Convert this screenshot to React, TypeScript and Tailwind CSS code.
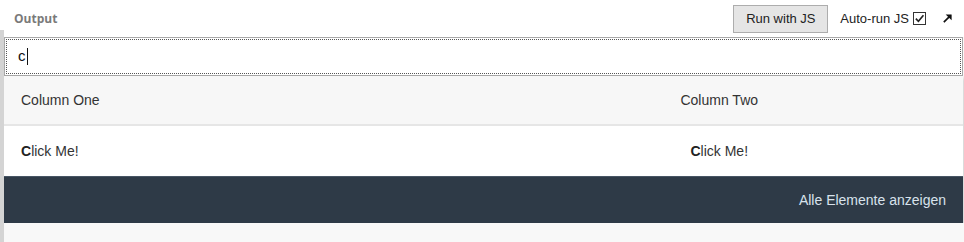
export default function App() {
  return (
    <div className="relative h-[242px] w-[964px] overflow-hidden bg-white font-['Liberation_Sans',Arial,sans-serif] text-[#333]">
      {/* left scroll strip */}
      <div className="absolute left-0 top-[30px] h-[212px] w-[4px] bg-[#d4d4d4]" />

      <header className="flex h-[37px] items-center justify-between pl-[14px] pr-[11px]">
        <span className="font-['Open_Sans',sans-serif] text-[12px] font-bold text-[#7a7a7a]">
          Output
        </span>
        <div className="flex items-center">
          <button className="h-[28px] w-[95px] border border-[#adadad] bg-[#e5e5e5] text-[13px] text-[#222]">
            Run with JS
          </button>
          <label className="ml-[12px] flex items-center text-[13px] text-[#222]">
            Auto-run JS
            <span className="ml-[4px] flex h-[13px] w-[13px] items-center justify-center border border-[#333] bg-white">
              <svg viewBox="0 0 12 12" className="h-[11px] w-[11px]">
                <path d="M2 6.2 L4.8 9 L10.3 2.5" fill="none" stroke="#222" strokeWidth="1.8" />
              </svg>
            </span>
          </label>
          <svg viewBox="0 0 12 12" className="ml-[16px] h-[11px] w-[11px]">
            <path d="M2 10 L9.5 2.5" stroke="#111" strokeWidth="1.8" />
            <path d="M4 1.5 H10.5 V8 Z" fill="#111" />
          </svg>
        </div>
      </header>

      <div className="ml-[4px] w-[960px] bg-[#f8f8f8] pr-[1px]">
        <div className="h-[39px] border border-[#a9a9a9] bg-white p-[1px]">
          <div className="flex h-full items-center border border-dotted border-[#555] pl-[11px] text-[15px] text-[#111]">
            c<span className="ml-[1px] h-[17px] w-px bg-[#111]" />
          </div>
        </div>

        <div className="shadow-[0_2px_3px_rgba(0,0,0,0.3)]">
          <div className="grid h-[50px] grid-cols-2 items-center border-b-2 border-[#e6e6e6] bg-[#f7f7f7] text-[14px] text-[#333]">
            <div className="pl-[17px]">Column One</div>
            <div className="pr-[8px] text-center">Column Two</div>
          </div>
          <div className="grid h-[50px] grid-cols-2 items-center bg-white text-[14px] text-[#333]">
            <div className="pl-[17px]">
              <b className="font-bold text-[#222]">C</b>lick Me!
            </div>
            <div className="pr-[8px] text-center">
              <b className="font-bold text-[#222]">C</b>lick Me!
            </div>
          </div>
          <div className="flex h-[47px] items-center justify-end border-t border-[#475564] bg-[#2e3a47] pr-[17px] text-[14px] text-[#d8e2ec]">
            Alle Elemente anzeigen
          </div>
        </div>
      </div>
      <div className="h-[20px] bg-[#f8f8f8]" />
    </div>
  );
}
